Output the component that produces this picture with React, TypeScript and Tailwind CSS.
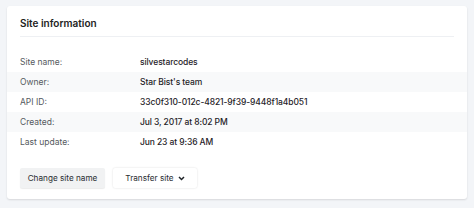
import React from "react";

const rows: [string, string][] = [
  ["Site name:", "silvestarcodes"],
  ["Owner:", "Star Bist's team"],
  ["API ID:", "33c0f310-012c-4821-9f39-9448f1a4b051"],
  ["Created:", "Jul 3, 2017 at 8:02 PM"],
  ["Last update:", "Jun 23 at 9:36 AM"],
];

export default function App() {
  return (
    <div
      className="w-[474px] h-[208px] bg-[#f3f5f8] pt-[6px] pl-[7px] pr-[7px]"
      style={{ fontFamily: "Inter, 'Noto Sans', sans-serif" }}
    >
      <div className="h-[193px] bg-white rounded-[3px] shadow-[0_1px_2px_rgba(0,0,0,0.12)] flex flex-col">
        <div className="mx-[13px] pt-[10px] h-[31px] border-b border-[#eef0f3]">
          <h2 className="text-[10px] leading-[14px] font-semibold text-[#222]">Site information</h2>
        </div>
        <div className="mt-[15px] flex flex-col">
          {rows.map(([k, v], i) => (
            <div
              key={k}
              className={`flex items-center h-[20px] pl-[13px] text-[8.5px] ${i % 2 === 1 ? "bg-[#f8f9fa]" : ""}`}
            >
              <span className="w-[120px] text-[#555a60]">{k}</span>
              <span className="text-[#1f2328] font-medium tracking-[-0.1px]">{v}</span>
            </div>
          ))}
        </div>
        <div className="mt-[16px] pl-[13px] flex gap-[8px]">
          <button className="h-[20px] w-[85px] bg-[#f1f2f3] rounded-[2px] shadow-[0_1px_1px_rgba(0,0,0,0.08)] text-[8.2px] text-[#2a2d31]">
            Change site name
          </button>
          <button className="h-[20px] w-[84px] bg-white rounded-[2px] shadow-[0_0_2px_rgba(0,0,0,0.15)] text-[8.2px] text-[#2a2d31] flex items-center justify-center gap-[4px]">
            Transfer site
            <svg width="7" height="5" viewBox="0 0 7 5">
              <path d="M1 1 L3.5 3.5 L6 1" stroke="#1f2328" strokeWidth="1.5" fill="none" />
            </svg>
          </button>
        </div>
      </div>
    </div>
  );
}
